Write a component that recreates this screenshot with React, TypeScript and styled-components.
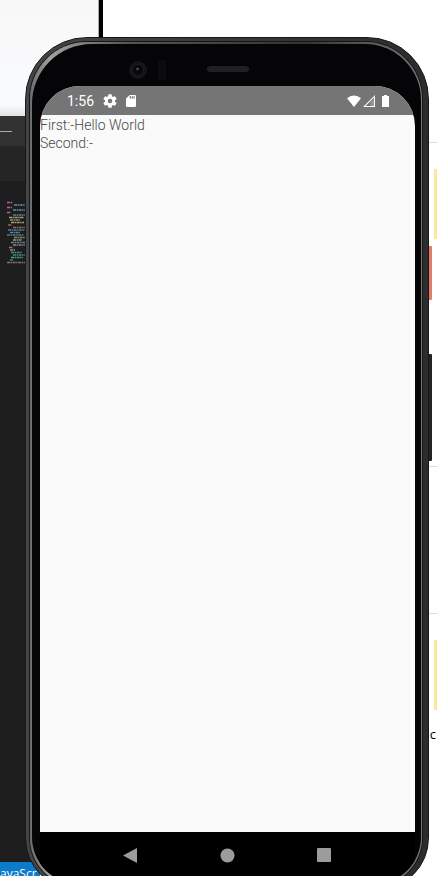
import React from "react";
import styled, { createGlobalStyle } from "styled-components";

const GlobalStyle = createGlobalStyle`
  * { box-sizing: border-box; }
  body { margin: 0; font-family: Roboto, "Liberation Sans", sans-serif; }
`;

const Desktop = styled.main`
  position: relative;
  height: 100vh;
  overflow: hidden;
  background: #fff;
  padding: 37px 8px 0 25px;
`;

const BrowserWindow = styled.div`
  position: absolute;
  left: 0;
  top: 0;
  width: 103px;
  height: 130px;
  background: linear-gradient(#f8f8f8, #fafbfd 104px, #dedfe1 118px);
  border-right: 4px solid #000;
  box-shadow: inset -1px 0 #aaa;
`;

const EditorWindow = styled.div`
  position: absolute;
  left: 0;
  top: 116px;
  bottom: 0;
  width: 40px;
  background: #1e1e1e;
  display: flex;
  flex-direction: column;
`;

const EditorTitle = styled.div`
  height: 30px;
  background: #323233;
  padding-top: 15px;
`;

const MinimizeMark = styled.div`
  width: 12px;
  height: 1px;
  background: #aaa;
`;

const EditorTabs = styled.div`
  height: 35px;
  background: #252526;
`;

const Minimap = styled.svg`
  width: 22px;
  height: 64px;
  margin: 20px 0 0 6px;
`;

const EditorStatus = styled.div`
  margin-top: auto;
  height: 14px;
  background: #0c7bcb;
  color: #fff;
  font: 12px/24px "Open Sans", sans-serif;
  white-space: nowrap;
`;

const Rule = styled.div<{ $top: number }>`
  position: absolute;
  top: ${(p) => p.$top}px;
  right: 0;
  width: 10px;
  height: 1px;
  background: #ddd;
`;

const Highlight = styled.div<{ $top: number }>`
  position: absolute;
  top: ${(p) => p.$top}px;
  right: 0;
  width: 3px;
  height: 70px;
  background: #fce998;
`;

const PageText = styled.span`
  position: absolute;
  top: 726px;
  right: 1px;
  font: 13px/16px "Open Sans", sans-serif;
  color: #000;
`;

const SideKey = styled.div<{ $top: number; $height: number; $color: string }>`
  position: absolute;
  top: ${(p) => p.$top}px;
  right: 5px;
  width: 5px;
  height: ${(p) => p.$height}px;
  border-radius: 0 1px 1px 0;
  background: ${(p) => p.$color};
`;

const Phone = styled.section`
  position: relative;
  height: calc(100% + 14px);
  padding: 4px 6px 3px 4px;
  border-radius: 62px 62px 52px 52px;
  background: linear-gradient(90deg, #444546, #2b2c2d);
  border: 1px solid #161718;
`;

const Rim = styled.div`
  height: 100%;
  padding: 2px 1px 2px 2px;
  border-radius: 57px 57px 48px 48px;
  background: linear-gradient(90deg, #6c6c6c, #a0a0a0 20px, #555 25%, #333 70%, #777);
  box-shadow: 0 0 0 1px #161617;
`;

const Bezel = styled.div`
  height: 100%;
  display: flex;
  flex-direction: column;
  overflow: hidden;
  padding: 0 6px 0 8px;
  border-radius: 60px 56px 47px 47px;
  background: #050507;
`;

const Forehead = styled.header`
  position: relative;
  flex: none;
  height: 42px;
`;

const Camera = styled.svg`
  position: absolute;
  left: 86px;
  top: 14px;
  width: 44px;
  height: 24px;
`;

const Speaker = styled.div`
  width: 42px;
  height: 6px;
  margin: 22px auto 0;
  border-radius: 3px;
  background: #202022;
`;

const Screen = styled.div`
  flex: 1;
  display: flex;
  flex-direction: column;
  overflow: hidden;
  border-radius: 40px 40px 0 0;
  background: #fafafa;
`;

const StatusBar = styled.div`
  height: 29px;
  display: flex;
  align-items: center;
  padding: 0 26px 0 27px;
  background: #757575;
  color: #fff;
  font-size: 14px;
`;

const StatusGroup = styled.div<{ $gap: number; $end?: boolean }>`
  display: flex;
  align-items: center;
  gap: ${(p) => p.$gap}px;
  margin-left: ${(p) => (p.$end ? "auto" : "9px")};
`;

const Content = styled.div`
  flex: 1;
  color: #484848;
  font-size: 14px;
  font-weight: 300;
  line-height: 18px;
  padding-top: 1px;
`;

const Line = styled.p`
  margin: 0;
`;

const NavBar = styled.nav`
  flex: none;
  height: 52px;
  display: flex;
  justify-content: center;
  gap: 72px;
  padding-top: 11px;
  background: #000;
`;

const NavButton = styled.button`
  width: 25px;
  height: 25px;
  padding: 0;
  border: 0;
  background: none;
  color: #9c9c9c;
`;

const Glyph = styled.svg`
  display: block;
  fill: currentColor;
`;

const codeRows: [number, number, string][] = [
  [1, 6, "#a46b92"], [8, 14, "#6689a8"], [1, 5, "#a46b92"], [7, 15, "#6689a8"],
  [1, 4, "#a46b92"], [7, 12, "#668099"], [3, 15, "#a9a275"], [4, 10, "#8f8e67"],
  [5, 13, "#a9a275"], [2, 4, "#946c55"], [7, 13, "#946c55"], [2, 17, "#537b9d"],
  [4, 10, "#588caa"], [1, 17, "#537b9d"], [8, 11, "#8f8e67"], [7, 9, "#9a9a70"],
  [5, 14, "#668099"], [7, 13, "#888"], [3, 4, "#a46b92"], [4, 5, "#8f8e67"],
  [5, 11, "#438b80"], [7, 13, "#438b80"], [5, 12, "#499b8a"], [4, 3, "#666"],
  [1, 18, "#777"],
];

export default function App() {
  return (
    <>
      <GlobalStyle />
      <Desktop>
        <BrowserWindow />
        <EditorWindow>
          <EditorTitle><MinimizeMark /></EditorTitle>
          <EditorTabs />
          <Minimap viewBox="0 0 22 64" aria-hidden="true">
            {codeRows.map(([x, w, color], i) => (
              <path key={i} d={`M${x} ${i * 2.5 + 1.5}h${w}`} stroke={color} strokeWidth="1.6" strokeDasharray="3 .6 1.4 .6" />
            ))}
          </Minimap>
          <EditorStatus>avaScr</EditorStatus>
        </EditorWindow>
        <Rule $top={142} />
        <Rule $top={466} />
        <Rule $top={613} />
        <Highlight $top={169} />
        <Highlight $top={640} />
        <PageText>c</PageText>
        <SideKey $top={246} $height={54} $color="#e17c6b" />
        <SideKey $top={354} $height={107} $color="#242423" />
        <Phone>
          <Rim>
            <Bezel>
              <Forehead>
                <Camera viewBox="0 0 44 24" aria-hidden="true">
                  <circle cx="12" cy="12" r="9" fill="#151518" />
                  <circle cx="12" cy="12" r="5.5" fill="#08080b" stroke="#1c1c22" />
                  <circle cx="11.5" cy="11" r="1.3" fill="#52525f" />
                  <path d="M32 2h8v20h-8z" fill="#0b0b0d" />
                </Camera>
                <Speaker />
              </Forehead>
              <Screen>
                <StatusBar>
                  <time>1:56</time>
                  <StatusGroup $gap={9}>
                    <Glyph width="14" height="14" viewBox="2 2 20 20" aria-hidden="true">
                      <path d="M19.14 12.94c.04-.3.06-.61.06-.94s-.02-.64-.07-.94l2.03-1.58a.49.49 0 0 0 .12-.61l-1.92-3.32a.49.49 0 0 0-.59-.22l-2.39.96a7 7 0 0 0-1.62-.94l-.36-2.54a.48.48 0 0 0-.48-.41h-3.84a.48.48 0 0 0-.47.41l-.36 2.54a7 7 0 0 0-1.62.94l-2.39-.96a.49.49 0 0 0-.59.22L2.74 8.87a.48.48 0 0 0 .12.61l2.03 1.58a7 7 0 0 0 0 1.88l-2.03 1.58a.49.49 0 0 0-.12.61l1.92 3.32c.12.22.37.29.59.22l2.39-.96c.5.38 1.03.7 1.62.94l.36 2.54c.05.24.24.41.48.41h3.84c.24 0 .44-.17.47-.41l.36-2.54a7 7 0 0 0 1.62-.94l2.39.96c.22.08.47 0 .59-.22l1.92-3.32a.48.48 0 0 0-.12-.61zM12 15.2A3.2 3.2 0 1 1 12 8.800a3.2 3.2 0 0 1 0 6.400z" />
                    </Glyph>
                    <Glyph width="10" height="12" viewBox="4 2 16 20" preserveAspectRatio="none" aria-hidden="true">
                      <path d="M18 2h-8L4 8v12a2 2 0 0 0 2 2h12a2 2 0 0 0 2-2V4a2 2 0 0 0-2-2zm-6 6h-2V4h2zm3 0h-2V4h2zm3 0h-2V4h2z" />
                    </Glyph>
                  </StatusGroup>
                  <StatusGroup $gap={2} $end>
                    <Glyph width="14" height="12" viewBox="0 0 14 12" aria-hidden="true">
                      <path d="M7 12 0 3.200Q3 .5 7 .5t7 2.700z" />
                    </Glyph>
                    <Glyph width="17" height="12" viewBox="0 0 17 12" aria-hidden="true">
                      <path d="M12 0v12H0zM11 2.500 2.500 11H11z" fillRule="evenodd" />
                      <path d="M7.500 7 11 4v7H7.500z" fillOpacity=".25" />
                    </Glyph>
                    <Glyph width="7" height="12" viewBox="0 0 7 12" aria-hidden="true">
                      <path d="M2 0h3v1h2v11H0V1h2z" />
                    </Glyph>
                  </StatusGroup>
                </StatusBar>
                <Content>
                  <Line>First:-Hello World</Line>
                  <Line>Second:-</Line>
                </Content>
              </Screen>
              <NavBar aria-label="System navigation">
                <NavButton aria-label="Back">
                  <Glyph width="25" height="25" viewBox="0 0 25 25"><path d="M19 5v15L5 12.500z" /></Glyph>
                </NavButton>
                <NavButton aria-label="Home">
                  <Glyph width="25" height="25" viewBox="0 0 25 25"><circle cx="12.500" cy="12.500" r="7" /></Glyph>
                </NavButton>
                <NavButton aria-label="Overview">
                  <Glyph width="25" height="25" viewBox="0 0 25 25"><rect x="5" y="5" width="14" height="14" rx="1" /></Glyph>
                </NavButton>
              </NavBar>
            </Bezel>
          </Rim>
        </Phone>
      </Desktop>
    </>
  );
}
